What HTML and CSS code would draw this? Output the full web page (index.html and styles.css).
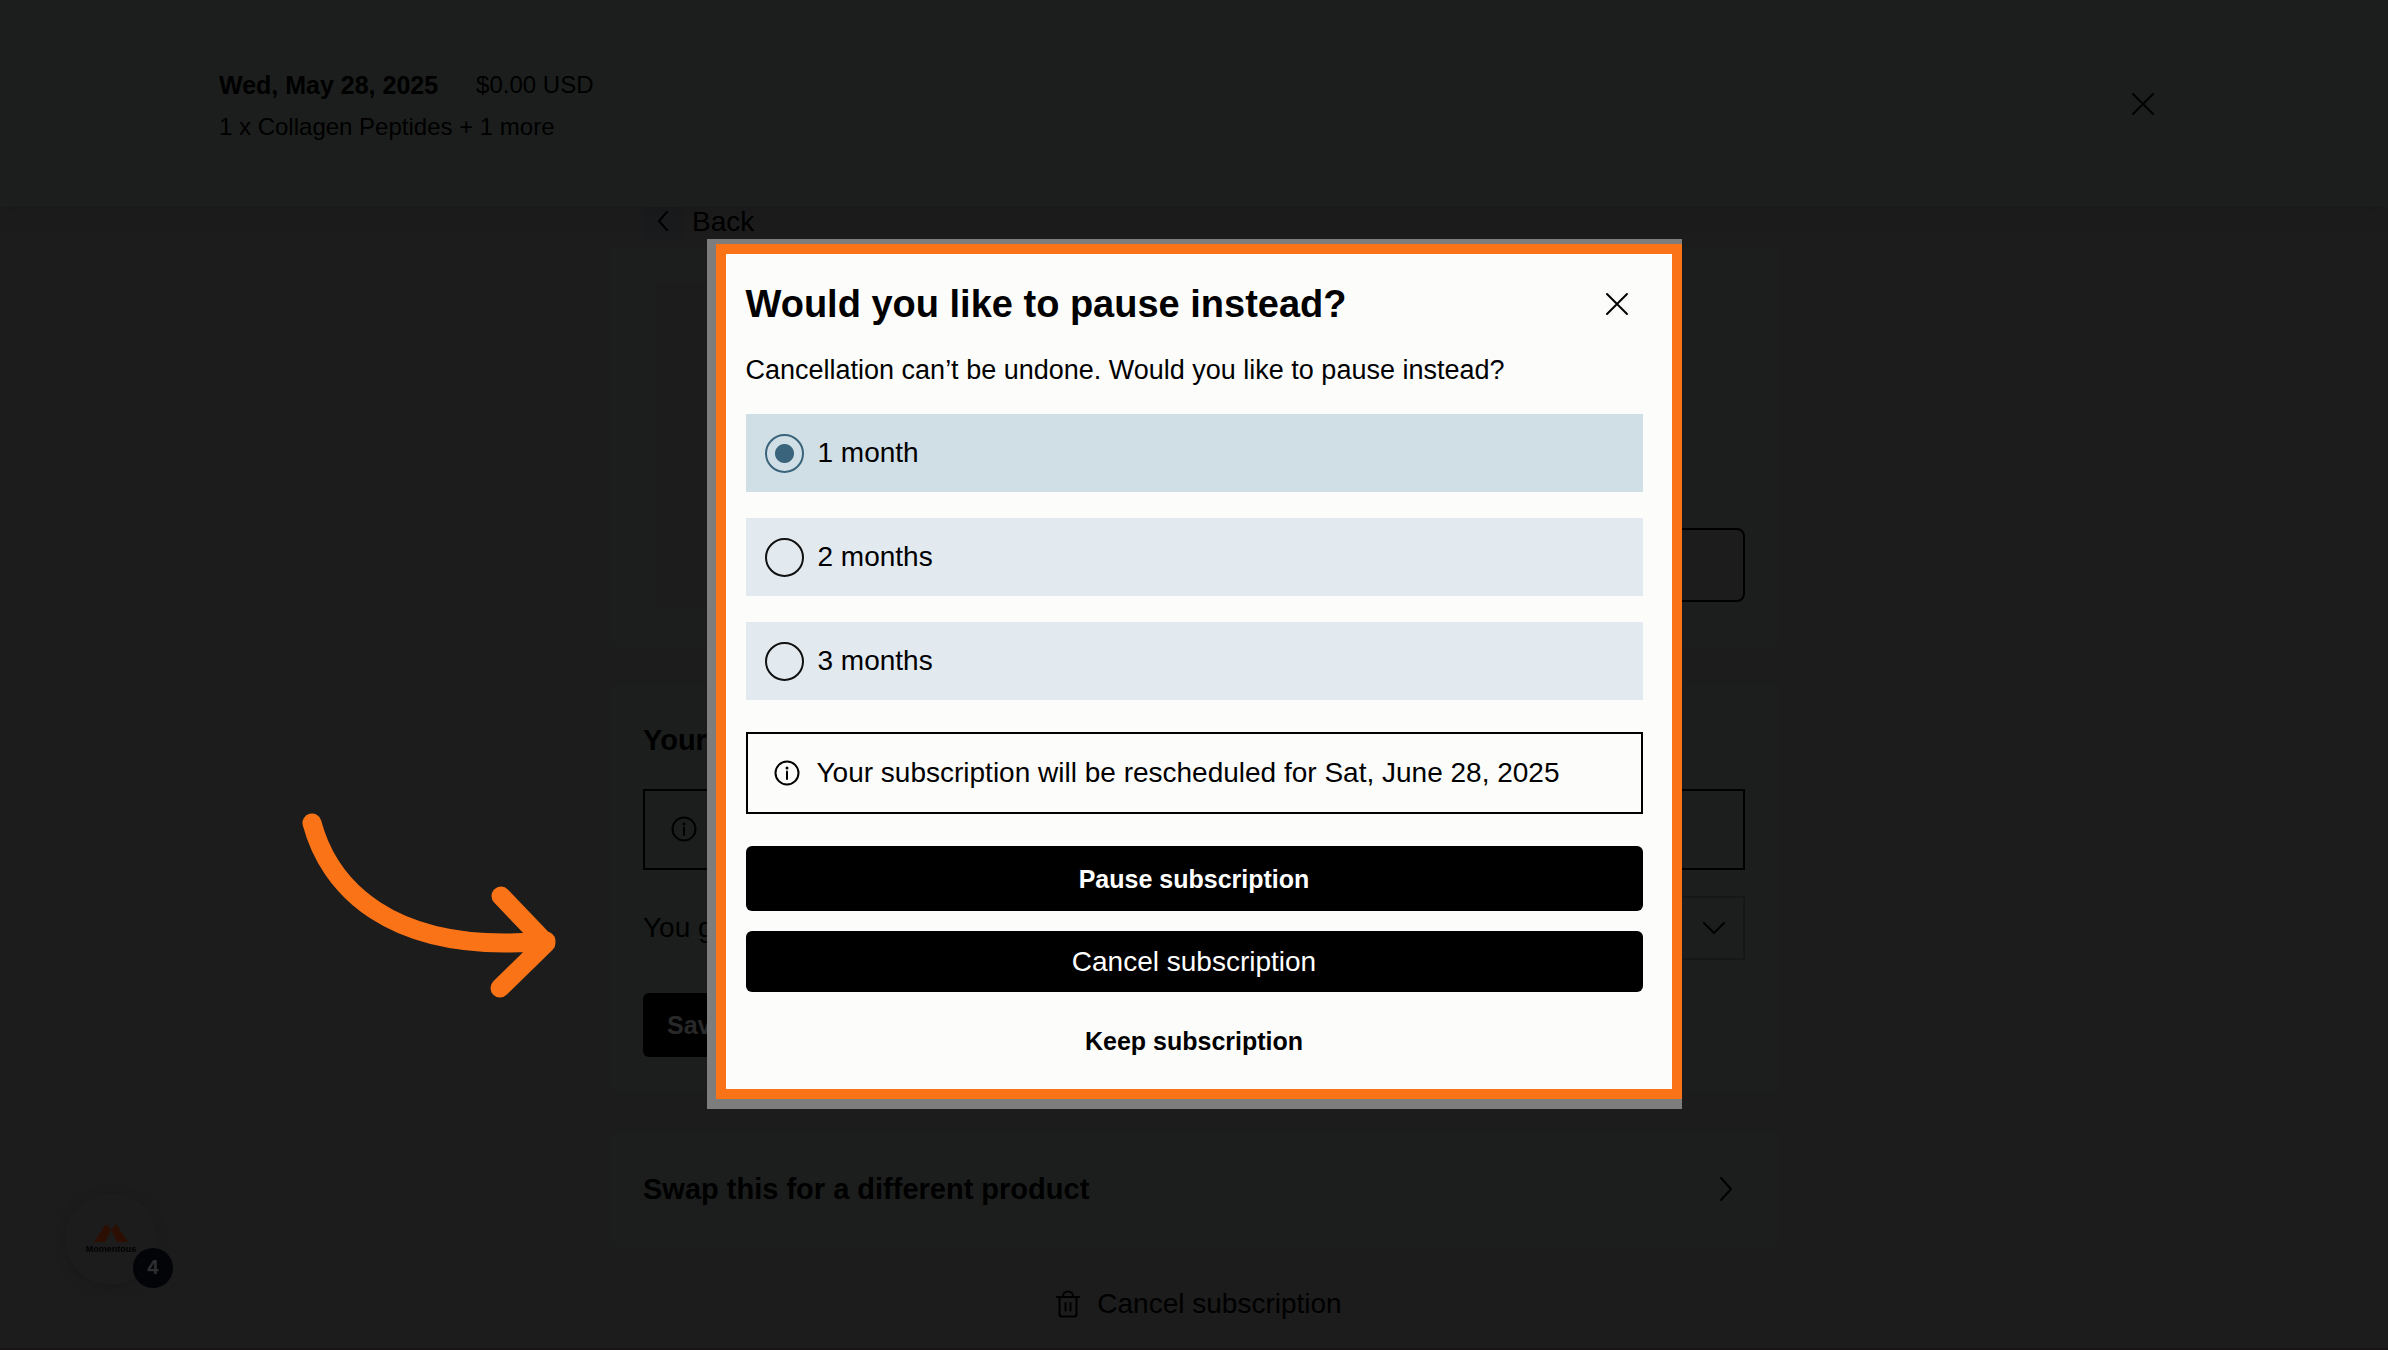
FILE: index.html
```html
<!DOCTYPE html>
<html lang="en">
<head>
<meta charset="utf-8">
<meta name="viewport" content="width=device-width, initial-scale=1">
<title>Manage subscription</title>
<link rel="stylesheet" href="styles.css">
</head>
<body>
<header class="topbar">
  <div class="topbar-inner">
    <div class="order">
      <div class="order-line"><strong class="order-date">Wed, May 28, 2025</strong><span class="order-price">$0.00 USD</span></div>
      <div class="order-items">1 x Collagen Peptides + 1 more</div>
    </div>
    <button class="icon-button" type="button" aria-label="Close order">
      <svg width="24" height="24" viewBox="0 0 24 24"><path d="M2 2 22 22M22 2 2 22"/></svg>
    </button>
  </div>
</header>

<main class="page">
  <a class="back" href="#">
    <span class="back-icon"><svg width="12" height="22" viewBox="0 0 12 22"><path d="M10 2 2 11 10 20"/></svg></span>
    Back
  </a>

  <section class="card product">
    <div class="product-image"></div>
    <input class="quantity" type="text" aria-label="Quantity">
  </section>

  <section class="card subscription">
    <h2 class="card-title">Your subscription</h2>
    <div class="notice">
      <svg width="26" height="26" viewBox="0 0 26 26"><circle cx="13" cy="13" r="11.5"/><path d="M13 11.5V19"/><circle class="dot" cx="13" cy="8" r="1.5"/></svg>
    </div>
    <div class="frequency">
      <label for="frequency">You get this</label>
      <div class="select-wrap">
        <select id="frequency"><option></option></select>
        <svg class="select-arrow" width="24" height="14" viewBox="0 0 24 14"><path d="M2 2 12 12 22 2"/></svg>
      </div>
    </div>
    <button class="save" type="button">Save</button>
  </section>

  <a class="card swap" href="#">
    <span class="card-title">Swap this for a different product</span>
    <svg width="14" height="26" viewBox="0 0 14 26"><path d="M2 2 12 13 2 24"/></svg>
  </a>

  <a class="cancel-link" href="#">
    <svg width="24" height="28" viewBox="0 0 24 28"><path d="M1 7H23M7 7V6A5 4.5 0 0 1 17 6V7M3.5 7V24.5Q3.5 26.5 5.5 26.5H18.5Q20.5 26.5 20.5 24.5V7M9.5 13V20.5M14.5 13V20.5"/></svg>
    Cancel subscription
  </a>
</main>

<button class="chat" type="button" aria-label="Open chat">
  <svg width="34" height="18" viewBox="0 0 34 18"><path d="M0 18 12 0 17 6 22 0 34 18H23L17 6 11 18Z"/></svg>
  <span class="chat-name">Momentous</span>
  <span class="chat-count">4</span>
</button>

<svg class="pointer" width="256" height="188" viewBox="0 0 256 188"><path d="M12 12C28 72 86 145 246 130M201 85 246 132 200 177"/></svg>

<div class="overlay">
  <div class="frame">
    <form class="dialog" role="dialog" aria-labelledby="dialog-title">
      <div class="dialog-head">
        <h1 id="dialog-title">Would you like to pause instead?</h1>
        <button class="icon-button" type="button" aria-label="Close">
          <svg width="24" height="24" viewBox="0 0 24 24"><path d="M2 2 22 22M22 2 2 22"/></svg>
        </button>
      </div>
      <p class="lead">Cancellation can’t be undone. Would you like to pause instead?</p>
      <div class="options" role="radiogroup" aria-labelledby="dialog-title">
        <label class="option"><input type="radio" name="pause" value="1" checked>1 month</label>
        <label class="option"><input type="radio" name="pause" value="2">2 months</label>
        <label class="option"><input type="radio" name="pause" value="3">3 months</label>
      </div>
      <div class="notice notice-dialog">
        <svg width="26" height="26" viewBox="0 0 26 26"><circle cx="13" cy="13" r="11.5"/><path d="M13 11.5V19"/><circle class="dot" cx="13" cy="8" r="1.5"/></svg>
        <span>Your subscription will be rescheduled for Sat, June 28, 2025</span>
      </div>
      <button class="action pause" type="button">Pause subscription</button>
      <button class="action cancel" type="button">Cancel subscription</button>
      <button class="action keep" type="button">Keep subscription</button>
    </form>
  </div>
</div>
</body>
</html>
```

FILE: styles.css
```css
* { box-sizing: border-box; }

:root {
  --page: #1c1c1c;
  --card: #1c1e1d;
  --paper: #fcfcfa;
  --accent: #fa7417;
}

body {
  margin: 0;
  min-height: 100vh;
  display: flex;
  flex-direction: column;
  background: var(--page);
  border-bottom: 2px solid #181315;
  color: #000;
  font: 28px/36px "Liberation Sans", Arial, sans-serif;
}

button, input, select { font: inherit; color: inherit; }
button { border: 0; padding: 0; background: none; cursor: pointer; }
a { color: inherit; text-decoration: none; }
h1, h2, p { margin: 0; }
svg { display: block; flex: none; fill: none; stroke: currentColor; stroke-width: 2; stroke-linecap: round; stroke-linejoin: round; }
svg .dot { fill: currentColor; stroke: none; }

/* Order bar */
.topbar {
  position: relative;
  height: 207px;
  background: var(--card);
  box-shadow: 0 4px 24px rgba(0, 0, 0, 0.1);
}
.topbar-inner {
  max-width: 1950px;
  height: 100%;
  margin: 0 auto;
  display: flex;
  align-items: center;
  justify-content: space-between;
}
.order { padding-top: 4px; display: flex; flex-direction: column; gap: 6px; }
.order-line { display: flex; gap: 38px; font-size: 24px; }
.order-date { font-size: 25px; }
.order-items { font-size: 24px; }
.icon-button { width: 52px; height: 52px; display: grid; place-items: center; }

/* Page column */
.page {
  flex: 1;
  width: 100%;
  max-width: 1168px;
  margin: 0 auto;
  display: flex;
  flex-direction: column;
}
.back {
  align-self: flex-start;
  margin-left: 33px;
  height: 40px;
  display: flex;
  align-items: flex-start;
  gap: 10px;
  line-height: 30px;
}
.back-icon { width: 39px; height: 33px; padding-top: 3px; display: flex; justify-content: center; background: #1a1b1d; }
.card { background: var(--card); padding: 36px 33px; }
.card-title { font-size: 29px; font-weight: 700; line-height: 40px; }

.product {
  height: 399px;
  padding-left: 46px;
  display: grid;
  grid-template-columns: 328px 1fr;
  gap: 32px;
  align-items: end;
}
.product-image { height: 100%; background: var(--page); }
.quantity { width: 100%; height: 74px; margin-bottom: 8px; border: 2px solid #000; border-radius: 8px; background: var(--page); }

.subscription { height: 409px; margin-top: 38px; display: flex; flex-direction: column; align-items: stretch; }
.notice {
  height: 82px;
  padding: 0 26px;
  display: flex;
  align-items: center;
  gap: 17px;
  border: 2px solid #000;
}
.subscription .notice { margin-top: 29px; }
.frequency { margin-top: 26px; display: flex; align-items: center; gap: 24px; }
.select-wrap { position: relative; flex: 1; display: flex; }
.select-wrap select { width: 100%; height: 64px; border: 2px solid #161716; appearance: none; background: transparent; }
.select-arrow { position: absolute; right: 19px; top: 25px; pointer-events: none; }
.save {
  align-self: flex-start;
  height: 65px;
  margin-top: 33px;
  padding: 0 24px;
  border-radius: 6px;
  background: #000;
  color: #292929;
  font-size: 25px;
  font-weight: 700;
}

.swap { height: 114px; margin-top: 39px; padding-right: 45px; display: flex; align-items: center; justify-content: space-between; }
.cancel-link { align-self: center; margin-top: 40px; padding-left: 10px; display: flex; align-items: center; gap: 17px; }

/* Chat launcher */
.chat {
  position: fixed;
  left: 65px;
  bottom: 65px;
  width: 92px;
  height: 92px;
  border-radius: 50%;
  background: var(--page);
  box-shadow: 0 2px 12px rgba(0, 0, 0, 0.16);
  display: flex;
  flex-direction: column;
  align-items: center;
  justify-content: center;
  gap: 1px;
}
.chat svg { fill: #2c0f02; stroke: none; }
.chat-name { font-size: 9px; font-weight: 700; line-height: 12px; }
.chat-count {
  position: absolute;
  right: -16px;
  bottom: -3px;
  width: 40px;
  height: 40px;
  border-radius: 50%;
  background: #020407;
  color: #2c2e30;
  font: 700 19px/40px Inter, sans-serif;
  text-align: center;
}

/* Hand-drawn arrow towards the dialog */
.pointer { position: fixed; left: 300px; top: 811px; stroke: var(--accent); stroke-width: 19; }

/* Dialog */
.overlay { position: fixed; inset: 0; padding-bottom: 2px; display: grid; place-items: center; pointer-events: none; }
.frame { width: 975px; max-width: 100%; padding: 5px 0 10px 9px; background: #7d7d7d; pointer-events: auto; }
.dialog {
  padding: 24px 29px 18px 20px;
  display: flex;
  flex-direction: column;
  border: 10px solid var(--accent);
  background: var(--paper);
}
.dialog-head { display: flex; align-items: center; justify-content: space-between; }
.dialog-head h1 { font-size: 38px; line-height: 52px; }
.lead { margin-top: 22px; font-size: 27px; line-height: 36px; }
.options { margin-top: 26px; display: flex; flex-direction: column; gap: 26px; }
.option { height: 78px; padding: 0 19px; display: flex; align-items: center; gap: 14px; background: #e2eaf0; }
.option:has(:checked) { background: #d0dee5; }
.option input {
  appearance: none;
  width: 39px;
  height: 39px;
  margin: 0;
  border: 2px solid #111;
  border-radius: 50%;
}
.option input:checked { border-color: #3a647b; background: radial-gradient(circle, #3a647b 9px, transparent 10px); }
.notice-dialog { margin-top: 32px; }
.action { height: 61px; border-radius: 6px; background: #000; color: #fff; }
.pause { height: 65px; margin-top: 32px; font-size: 25px; font-weight: 700; }
.cancel { margin-top: 20px; }
.keep { margin-top: 18px; background: none; color: #000; font-size: 25px; font-weight: 700; }
```
